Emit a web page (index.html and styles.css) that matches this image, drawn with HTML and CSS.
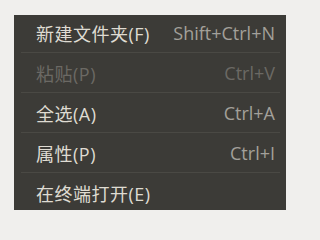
FILE: index.html
```html
<!DOCTYPE html>
<html lang="zh-CN">
<head>
<meta charset="utf-8">
<link rel="stylesheet" href="styles.css">
</head>
<body>
<div class="menu">
  <div class="item"><span class="label">新建文件夹(F)</span><span class="accel">Shift+Ctrl+N</span></div>
  <div class="sep"></div>
  <div class="item disabled"><span class="label">粘贴(P)</span><span class="accel">Ctrl+V</span></div>
  <div class="sep"></div>
  <div class="item"><span class="label">全选(A)</span><span class="accel">Ctrl+A</span></div>
  <div class="sep"></div>
  <div class="item"><span class="label">属性(P)</span><span class="accel">Ctrl+I</span></div>
  <div class="sep"></div>
  <div class="item"><span class="label">在终端打开(E)</span><span class="accel"></span></div>
</div>
</body>
</html>
```

FILE: styles.css
```css
html, body {
  margin: 0;
  padding: 0;
  background: #f0efed;
  width: 309px;
  height: 228px;
  overflow: hidden;
}
body {
  padding: 15px 0 0 14px;
  box-sizing: border-box;
  font-family: "Open Sans", "Noto Sans CJK SC", sans-serif;
}
.menu {
  width: 272px;
  height: 195px;
  box-sizing: border-box;
  background: #3c3b37;
  padding: 1px 0 0 0;
  display: flex;
  flex-direction: column;
}
.item {
  height: 33px;
  display: flex;
  align-items: center;
  justify-content: space-between;
  padding: 0 11px 0 22px;
  font-size: 18px;
  color: #dfdbd2;
}
.item .label {
  letter-spacing: 0.5px;
}
.item .accel {
  color: #a3a09a;
}
.item.disabled .label,
.item.disabled .accel {
  color: #6b6964;
}
.sep {
  height: 1px;
  margin: 3px 6px 3px 7px;
  background: #4a4944;
}
```
